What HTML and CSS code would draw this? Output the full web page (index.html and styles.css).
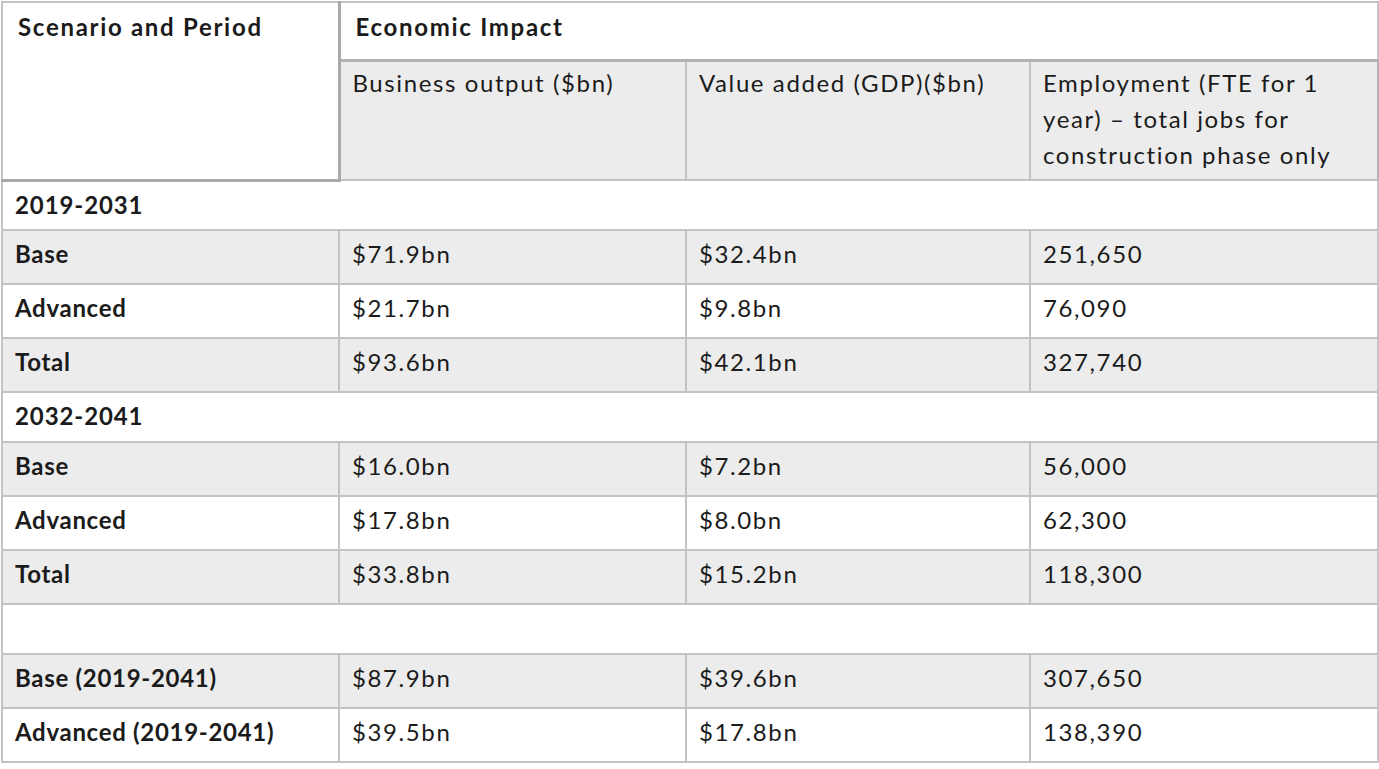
FILE: index.html
```html
<!DOCTYPE html>
<html>
<head>
<meta charset="utf-8">
<link rel="stylesheet" href="styles.css">
</head>
<body>
<table class="impact">
  <colgroup>
    <col class="c1"><col class="c2"><col class="c3"><col class="c4">
  </colgroup>
  <tr class="h1">
    <th class="corner" rowspan="2">Scenario and Period</th>
    <th class="top" colspan="3">Economic Impact</th>
  </tr>
  <tr class="h2">
    <td class="sub first">Business output ($bn)</td>
    <td class="sub">Value added (GDP)($bn)</td>
    <td class="sub last">Employment (FTE for 1 year) – total jobs for construction phase only</td>
  </tr>
  <tr class="section"><td colspan="4">2019-2031</td></tr>
  <tr class="row shade"><th>Base</th><td>$71.9bn</td><td>$32.4bn</td><td>251,650</td></tr>
  <tr class="row"><th>Advanced</th><td>$21.7bn</td><td>$9.8bn</td><td>76,090</td></tr>
  <tr class="row shade"><th>Total</th><td>$93.6bn</td><td>$42.1bn</td><td>327,740</td></tr>
  <tr class="section"><td colspan="4">2032-2041</td></tr>
  <tr class="row shade"><th>Base</th><td>$16.0bn</td><td>$7.2bn</td><td>56,000</td></tr>
  <tr class="row"><th>Advanced</th><td>$17.8bn</td><td>$8.0bn</td><td>62,300</td></tr>
  <tr class="row shade"><th>Total</th><td>$33.8bn</td><td>$15.2bn</td><td>118,300</td></tr>
  <tr class="section empty"><td colspan="4"></td></tr>
  <tr class="row shade"><th>Base (2019-2041)</th><td>$87.9bn</td><td>$39.6bn</td><td>307,650</td></tr>
  <tr class="row"><th>Advanced (2019-2041)</th><td>$39.5bn</td><td>$17.8bn</td><td>138,390</td></tr>
</table>
</body>
</html>
```
FILE: styles.css
```css
html, body {
  margin: 0;
  padding: 0;
  background: #ffffff;
}
body {
  padding: 1px 0 0 1px;
  font-family: Lato, "Open Sans", sans-serif;
  color: #1b1b1b;
}
.impact {
  border-collapse: collapse;
  table-layout: fixed;
  width: 1376px;
  font-size: 24px;
  line-height: 36px;
  letter-spacing: 1.6px;
}
.c1 { width: 337px; }
.c2 { width: 347px; }
.c3 { width: 344px; }
.c4 { width: 348px; }
.impact th, .impact td {
  border: 2px solid #c3c3c3;
  text-align: left;
  vertical-align: top;
  padding: 5px 12px 0 12px;
}
.impact th { font-weight: 700; letter-spacing: 0.7px; }
.h1 { height: 58px; }
.h1 th { padding-top: 6px; padding-left: 15px; letter-spacing: 1.7px; }
.corner {
  border-right: 3px solid #a9a9a9 !important;
  border-bottom: 3px solid #a9a9a9 !important;
}
.h2 { height: 120px; }
.sub {
  background: #ececec;
  border-top: 3px solid #b2b2b2 !important;
  font-weight: 400;
  padding-top: 3px !important;
}
.sub.last { border-right: 3px solid #b2b2b2 !important; }
.section { height: 50px; }
.section td { font-weight: 700; background: #ffffff; letter-spacing: 0.9px; }
.row { height: 54px; }
.shade th, .shade td { background: #ececec; }
.row td { font-weight: 400; }
```
